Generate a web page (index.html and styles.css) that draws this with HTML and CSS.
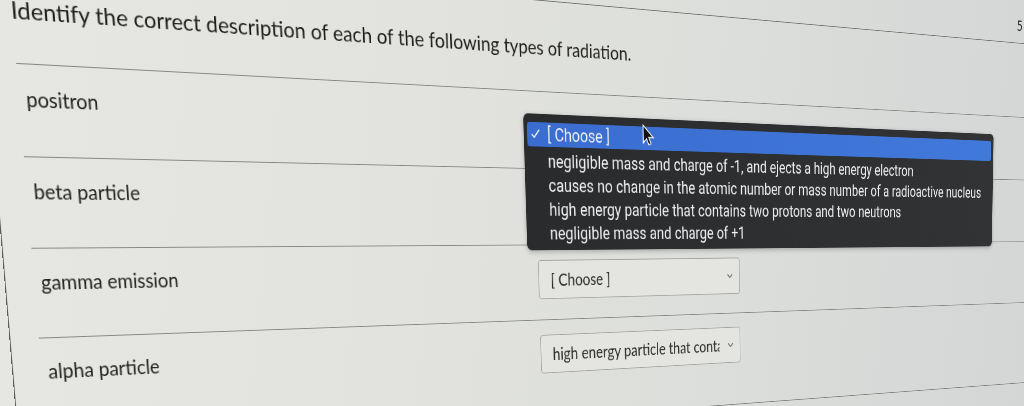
FILE: index.html
```html
<!DOCTYPE html>
<html lang="en">
<head>
    <meta charset="UTF-8">
    <meta name="viewport" content="width=device-width, initial-scale=1.0">
    <title>Quiz question</title>
    <link rel="stylesheet" href="styles.css">
</head>
<body>
    <!-- the whole sheet is tilted like the photo of the screen -->
    <div class="sheet">
        <div class="question">
            <div class="q-header">
                <span class="q-points">5 pts</span>
            </div>
            <div class="q-text">Identify the correct description of each of the following types of radiation.</div>

            <div class="answers">
                <div class="answer">
                    <div class="answer-label">positron</div>
                    <div class="select-cell">
                        <div class="select select-open">
                            <span>[ Choose ]</span>
                            <svg class="chevron" width="10" height="6" viewBox="0 0 10 6"><path d="M1 1l4 4 4-4"/></svg>
                        </div>
                        <ul class="menu">
                            <li class="menu-item selected">
                                <svg class="check" width="14" height="12" viewBox="0 0 14 12"><path d="M1.5 6.5l3.5 3.5 7.5-9"/></svg>
                                [ Choose ]
                            </li>
                            <li class="menu-item">negligible mass and charge of -1, and ejects a high energy electron</li>
                            <li class="menu-item">causes no change in the atomic number or mass number of a radioactive nucleus</li>
                            <li class="menu-item">high energy particle that contains two protons and two neutrons</li>
                            <li class="menu-item">negligible mass and charge of +1</li>
                        </ul>
                        <svg class="pointer" width="19" height="28" viewBox="0 0 16 24"><path d="M1 1v19l4.5-4.5 3 6.5 3-1.4-3-6.4h6.4z"/></svg>
                    </div>
                </div>
                <div class="answer">
                    <div class="answer-label">beta particle</div>
                    <div class="select-cell">
                        <div class="select">
                            <span>[ Choose ]</span>
                            <svg class="chevron" width="10" height="6" viewBox="0 0 10 6"><path d="M1 1l4 4 4-4"/></svg>
                        </div>
                    </div>
                </div>
                <div class="answer">
                    <div class="answer-label">gamma emission</div>
                    <div class="select-cell">
                        <div class="select">
                            <span>[ Choose ]</span>
                            <svg class="chevron" width="10" height="6" viewBox="0 0 10 6"><path d="M1 1l4 4 4-4"/></svg>
                        </div>
                    </div>
                </div>
                <div class="answer">
                    <div class="answer-label">alpha particle</div>
                    <div class="select-cell">
                        <div class="select">
                            <span class="select-value">high energy particle that contains two protons and two neutrons</span>
                            <svg class="chevron" width="10" height="6" viewBox="0 0 10 6"><path d="M1 1l4 4 4-4"/></svg>
                        </div>
                    </div>
                </div>
            </div>
        </div>
    </div>
</body>
</html>
```

FILE: styles.css
```css
html, body {
    margin: 0;
    padding: 0;
    height: 406px;
    overflow: hidden;
}
body {
    font-family: Lato, "Open Sans", sans-serif;
    color: #222320;
    background: linear-gradient(95deg, #e6e7e2 0%, #e2e3de 40%, #dcdedb 70%, #d3d6d5 100%);
}

/* camera angle of the photo: right side further away, slight lean */
.sheet {
    width: 1560px;
    height: 640px;
    transform-origin: 0 0;
    transform: matrix3d(1.034714, 0.076465, 0, 0.00033525, 0.087951, 1.058512, 0, 0.00010585, 0, 0, 1, 0, -28.848, -111.277, 0, 1);
}

.question {
    border-left: 1px solid #5c5d5a;
    border-bottom: 1px solid #7c7e7c;
    padding-bottom: 31px;
}
.q-header {
    display: flex;
    justify-content: flex-end;
    padding: 19px 4px 12px 28px;
    line-height: 26px;
    font-size: 22px;
    border-bottom: 1px solid #6f716f;
}
.q-points {
    color: #2a2b29;
    white-space: nowrap;
}
.q-text {
    padding: 39px 0 37px 28px;
    font-size: 23.8px;
    line-height: 30px;
    color: #1d1e1c;
}

.answers {
    margin-left: 29px;
}
.answer {
    display: flex;
    align-items: flex-start;
    height: 92px;
    box-sizing: border-box;
    padding-top: 18px;
    border-top: 1px solid #858784;
}
.answer-label {
    width: 613px;
    padding: 4px 0 0 7px;
    font-size: 20.5px;
    line-height: 24px;
}
.select-cell {
    position: relative;
    width: 322px;
}
.select {
    height: 48px;
    box-sizing: border-box;
    display: flex;
    align-items: center;
    justify-content: space-between;
    gap: 14px;
    padding: 0 11px 0 17px;
    border: 1px solid #a2a3a0;
    border-radius: 4px;
    background: #e4e5e1;
    font-size: 20.5px;
    color: #2b2c2a;
}
.select-value {
    white-space: nowrap;
    overflow: hidden;
}
.select-open {
    border-color: transparent;
    background: transparent;
}
.chevron {
    flex: none;
    fill: none;
    stroke: #5e5f5d;
    stroke-width: 1.3;
}

/* open native popup of the first select */
.menu {
    position: absolute;
    z-index: 2;
    top: 8px;
    left: -15px;
    width: 827px;
    height: 164px;
    box-sizing: border-box;
    margin: 0;
    padding: 10px 5px 6px;
    list-style: none;
    border-radius: 7px;
    background: linear-gradient(90deg, #2a2b2d, #323335);
    box-shadow: 0 2px 6px rgba(0, 0, 0, 0.25);
    font-family: Roboto, "Liberation Sans", sans-serif;
    font-size: 21.3px;
    color: #efefef;
}
.menu-item {
    height: 29px;
    line-height: 29px;
    padding-left: 29px;
    white-space: nowrap;
    position: relative;
}
.menu-item.selected {
    margin-bottom: 3px;
    border-radius: 4px;
    background: linear-gradient(90deg, #3a6dcf, #4179db);
}
.check {
    position: absolute;
    left: 5px;
    top: 8px;
    fill: none;
    stroke: #ffffff;
    stroke-width: 1.6;
}
.pointer {
    position: absolute;
    z-index: 3;
    left: 164px;
    top: 15px;
    fill: #111;
    stroke: #fff;
    stroke-width: 1.2;
}
```
